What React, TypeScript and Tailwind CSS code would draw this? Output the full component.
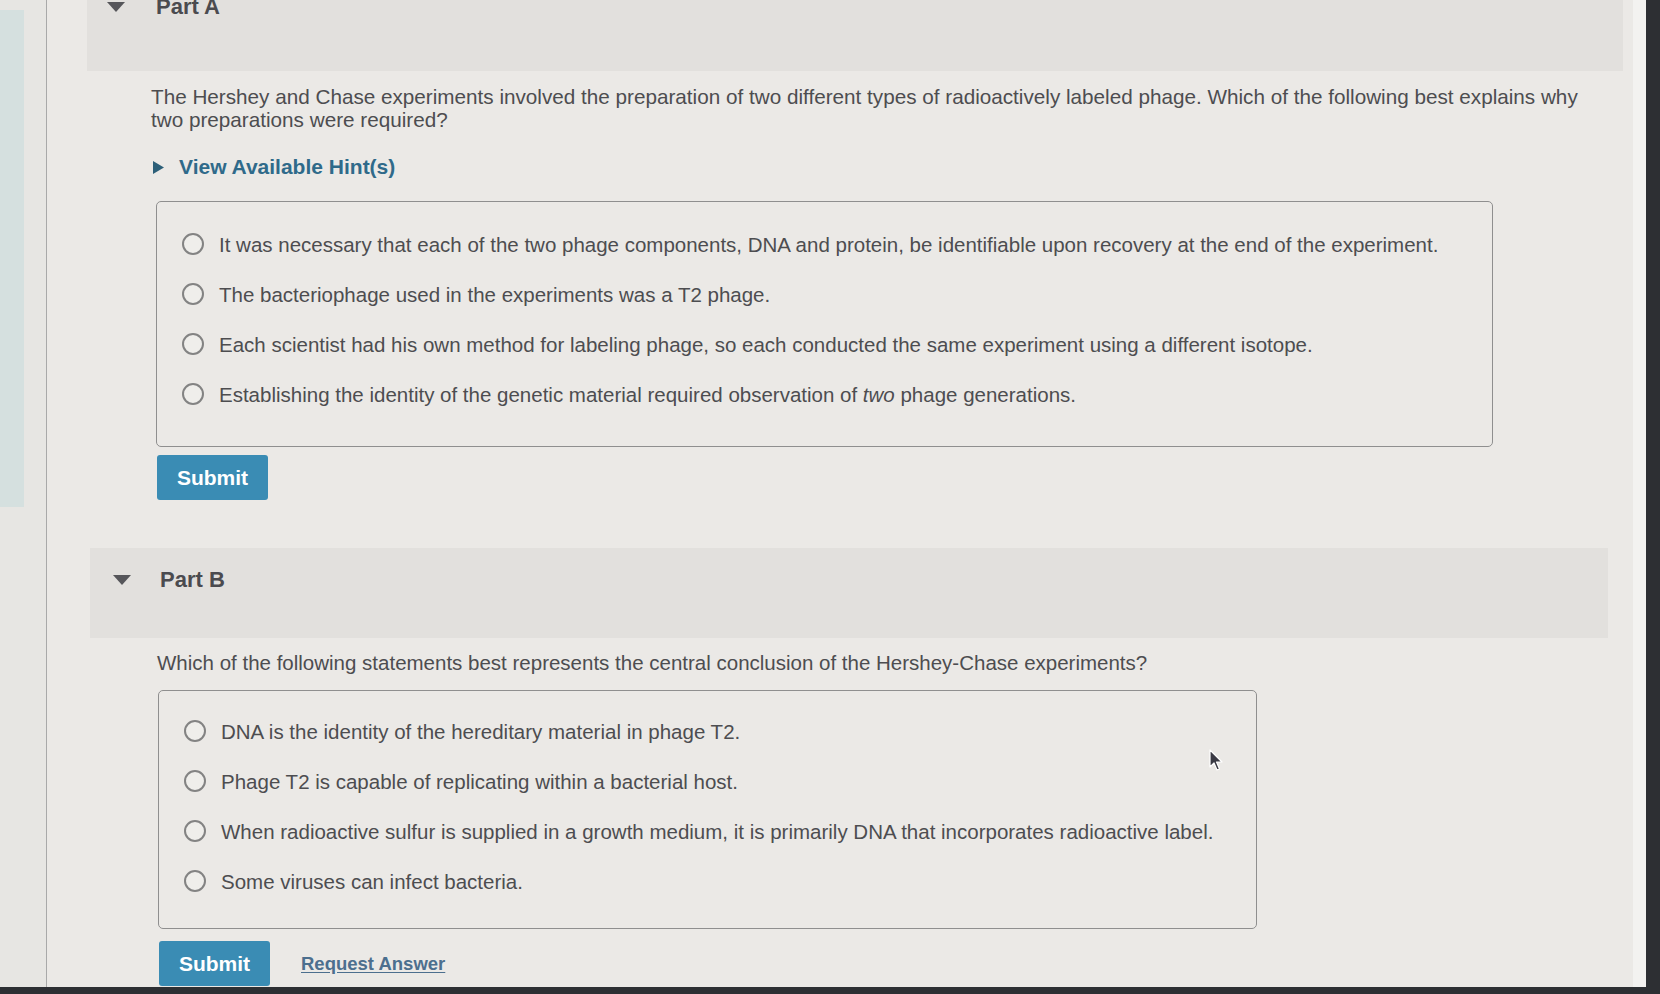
import React from 'react'

const partA = [
  'It was necessary that each of the two phage components, DNA and protein, be identifiable upon recovery at the end of the experiment.',
  'The bacteriophage used in the experiments was a T2 phage.',
  'Each scientist had his own method for labeling phage, so each conducted the same experiment using a different isotope.',
]

const partB = [
  'DNA is the identity of the hereditary material in phage T2.',
  'Phage T2 is capable of replicating within a bacterial host.',
  'When radioactive sulfur is supplied in a growth medium, it is primarily DNA that incorporates radioactive label.',
  'Some viruses can infect bacteria.',
]

function Radio() {
  return <span className="w-[22px] h-[22px] shrink-0 rounded-full border-2 border-[#838383] bg-[#efeeeb]" />
}

function Option({ children }: { children: React.ReactNode }) {
  return (
    <label className="flex items-center h-[50px] gap-[15px]">
      <Radio />
      <span className="text-[20.5px] leading-[23px] text-[#4d4d50]">{children}</span>
    </label>
  )
}

function DownTriangle() {
  return (
    <svg width="18" height="10" viewBox="0 0 18 10" className="shrink-0">
      <path d="M0 0 L18 0 L9 10 Z" fill="#56565a" />
    </svg>
  )
}

function SubmitButton() {
  return (
    <button className="w-[111px] h-[45px] rounded-[3px] bg-[#3a8cb4] text-white text-[21px] font-bold">
      Submit
    </button>
  )
}

export default function App() {
  return (
    <div className="relative w-[1660px] h-[994px] overflow-hidden flex bg-[#ebe9e6] font-['Liberation_Sans',Arial,sans-serif]">
      <div className="flex-1 flex flex-col">
        <div className="h-[987px] shrink-0 flex overflow-hidden">
          {/* left rail */}
          <div className="w-[46px] shrink-0 bg-[#e7e6e3]">
            <div className="w-[24px] h-[497px] mt-[10px] bg-[#d5e0df]" />
          </div>
          <div className="w-px shrink-0 bg-[#a9a9a9]" />

          {/* content */}
          <div className="flex-1 min-w-0 flex flex-col">
            {/* Part A */}
            <div className="shrink-0 -mt-[18px] ml-[40px] mr-[10px] h-[89px] bg-[#e2e0dd] flex items-start pt-[14px] pl-[20px] gap-[31px]">
              <div className="mt-[6px]"><DownTriangle /></div>
              <span className="text-[22px] leading-[22px] font-bold text-[#4b4b4f]">Part A</span>
            </div>

            <div className="shrink-0 pl-[104px] flex flex-col items-start">
              <p className="mt-[14px] w-[1430px] text-[20.7px] leading-[23px] text-[#4d4d50]">
                The Hershey and Chase experiments involved the preparation of two different types of radioactively labeled phage. Which of the following best explains why two preparations were required?
              </p>

              <div className="mt-[25px] ml-[2px] flex items-center gap-[15px]">
                <svg width="11" height="13" viewBox="0 0 11 13">
                  <path d="M0 0 L11 6.5 L0 13 Z" fill="#2c5f78" />
                </svg>
                <span className="text-[21px] leading-[22px] font-bold text-[#2f6a8a]">View Available Hint(s)</span>
              </div>

              <div className="mt-[23px] ml-[5px] w-[1337px] rounded-[5px] border border-[#8f8f8f] pt-[17px] pb-[27px] pl-[25px]">
                {partA.map((t) => (
                  <Option key={t}>{t}</Option>
                ))}
                <Option>
                  Establishing the identity of the genetic material required observation of <i>two</i> phage generations.
                </Option>
              </div>

              <div className="mt-[8px] ml-[6px]">
                <SubmitButton />
              </div>
            </div>

            {/* Part B */}
            <div className="shrink-0 mt-[48px] ml-[43px] mr-[25px] h-[90px] bg-[#e2e0dd] flex items-center pb-[26px] pl-[23px] gap-[29px]">
              <DownTriangle />
              <span className="text-[22px] leading-[22px] font-bold text-[#4b4b4f]">Part B</span>
            </div>

            <div className="shrink-0 pl-[110px] flex flex-col items-start">
              <p className="mt-[13px] text-[20.5px] leading-[23px] text-[#4d4d50]">
                Which of the following statements best represents the central conclusion of the Hershey-Chase experiments?
              </p>

              <div className="mt-[16px] ml-[1px] w-[1099px] rounded-[5px] border border-[#8f8f8f] pt-[15px] pb-[22px] pl-[25px]">
                {partB.map((t) => (
                  <Option key={t}>{t}</Option>
                ))}
              </div>

              <div className="mt-[12px] ml-[2px] flex items-center gap-[31px]">
                <SubmitButton />
                <a href="#" className="text-[18.5px] font-bold text-[#4c6f8e] underline underline-offset-2">
                  Request Answer
                </a>
              </div>
            </div>
          </div>

          {/* right edge */}
          <div className="w-[13px] shrink-0 bg-[#f3f2f0]" />
        </div>
        <div className="h-[7px] shrink-0 bg-[#2d2f33]" />
      </div>
      <div className="w-[14px] shrink-0 bg-[#2d2f33]" />

      {/* mouse pointer */}
      <svg width="16" height="24" viewBox="0 0 16 24" className="absolute left-[1209px] top-[749px]">
        <path d="M1 1 L1 18 L5 14 L8 21 L10.5 20 L7.5 13 L13 13 Z" fill="#3a3a44" stroke="#ffffff" strokeWidth="1.2" strokeLinejoin="round" />
      </svg>
    </div>
  )
}
